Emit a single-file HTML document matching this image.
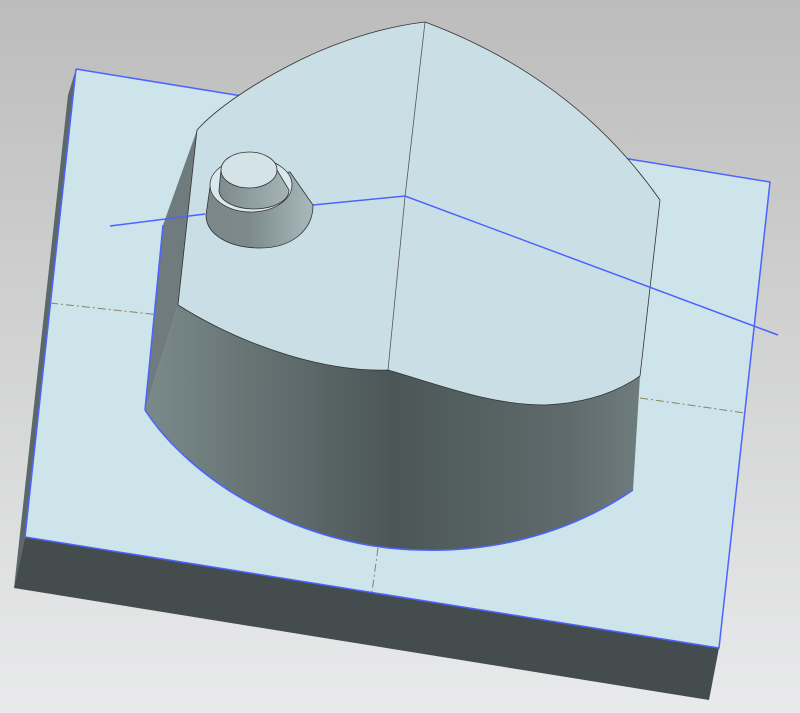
<!DOCTYPE html>
<html><head><style>html,body{margin:0;padding:0;width:800px;height:713px;overflow:hidden}</style></head>
<body>
<svg width="800" height="713" viewBox="0 0 800 713" xmlns="http://www.w3.org/2000/svg">
<defs>
<linearGradient id="bg" x1="0" y1="0" x2="0" y2="1"><stop offset="0" stop-color="#bcbcbc"/><stop offset="1" stop-color="#e9eaeb"/></linearGradient>
<linearGradient id="band" x1="0" y1="0" x2="1" y2="0"><stop offset="0" stop-color="#7a8a8a"/><stop offset="0.5" stop-color="#4c5657"/><stop offset="0.85" stop-color="#5e6a6b"/><stop offset="1" stop-color="#6f7c7d"/></linearGradient>
<linearGradient id="cone" x1="0" y1="0" x2="1" y2="0"><stop offset="0" stop-color="#7a8889"/><stop offset="0.4" stop-color="#7c8a8b"/><stop offset="1" stop-color="#a9b9bb"/></linearGradient>
<linearGradient id="cyl" x1="0" y1="0" x2="1" y2="0"><stop offset="0" stop-color="#7d8b8c"/><stop offset="1" stop-color="#a5b4b6"/></linearGradient>
</defs>
<rect width="800" height="713" fill="url(#bg)"/>
<polygon points="76,69 25,537 14,588 68,95" fill="#5c6767"/>
<polygon points="25,537 719,648 709,700 14,588" fill="#454c4d"/>
<polygon points="76,69 770,182 719,648 25,537" fill="#cde4eb"/>
<polyline points="76,69 770,182 719,648 25,537 76,69" fill="none" stroke="#4b63ff" stroke-width="1.5"/>
<g stroke="#8a8460" stroke-width="1" stroke-dasharray="8,3,2,3" fill="none">
<line x1="50" y1="303" x2="160" y2="315"/><line x1="640" y1="398" x2="745" y2="413"/><line x1="378" y1="548" x2="372" y2="592"/>
</g>
<path d="M178,305 C250,350 330,372 388,370 C440,385 490,405 545,405 C590,403 620,390 640,376 L633,490 C560,540 480,552 420,550 C300,548 190,480 145,410 Z" fill="url(#band)"/>
<path d="M145,410 C190,480 300,548 420,550 C480,552 560,540 633,490" fill="none" stroke="#4b63ff" stroke-width="1.5"/>
<polygon points="197,130 163,225 145,410 178,305" fill="#6f7b7c"/>
<path d="M197,130 C215,110 250,85 300,60 C345,38 390,26 425,22 C500,50 590,100 660,200 L640,376 C620,390 590,403 545,405 C490,405 440,385 388,370 C330,372 250,350 178,305 Z" fill="#c9dfe5" stroke="#333" stroke-width="0.8"/>
<polyline points="163,225 145,410" fill="none" stroke="#4b63ff" stroke-width="1.5"/>
<polyline points="425,22 405,197 388,370" fill="none" stroke="#555" stroke-width="0.8"/>
<g stroke="#4b63ff" stroke-width="1.5" fill="none">
<line x1="110" y1="226" x2="205" y2="214"/><polyline points="313,205 405,196 778,335"/>
</g>
<path d="M210,187 L206,215 C206,235 230,248 260,248 C292,248 313,230 313,205 L290,172 Z" fill="url(#cone)" stroke="#333" stroke-width="0.8"/>
<ellipse cx="251" cy="185" rx="41" ry="27" fill="#d9e8ec" stroke="#333" stroke-width="0.8"/>
<path d="M221,170 L219,190 C219,201 235,209 254,209 C273,209 289,201 289,190 L277,170 Z" fill="url(#cyl)" stroke="#333" stroke-width="0.8"/>
<ellipse cx="249" cy="170" rx="28" ry="18" fill="#d3e3e7" stroke="#333" stroke-width="0.8"/>
</svg>
</body></html>
